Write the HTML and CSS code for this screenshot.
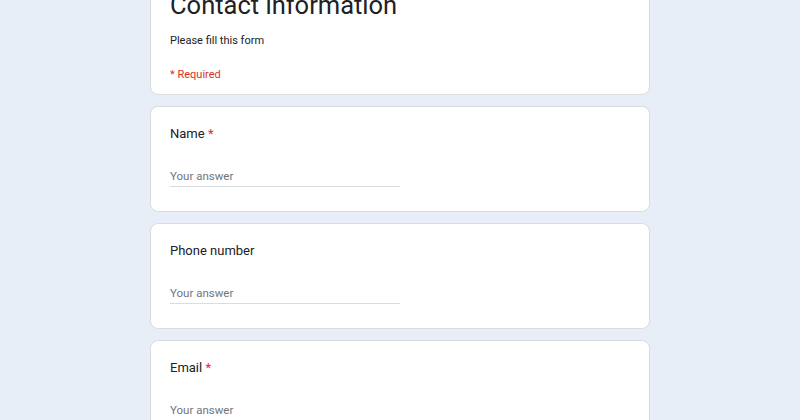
FILE: index.html
```html
<!DOCTYPE html>
<html lang="en">
<head>
    <meta charset="UTF-8">
    <meta name="viewport" content="width=device-width, initial-scale=1.0">
    <title>Contact information</title>
    <link rel="stylesheet" href="styles.css">
</head>
<body>
    <div class="container">
        <div class="card header-card">
            <h1>Contact information</h1>
            <p class="desc">Please fill this form</p>
            <p class="required-note">* Required</p>
        </div>

        <div class="card question">
            <div class="label">Name <span class="star">*</span></div>
            <input class="answer" type="text" placeholder="Your answer">
        </div>

        <div class="card question">
            <div class="label">Phone number</div>
            <input class="answer" type="text" placeholder="Your answer">
        </div>

        <div class="card question">
            <div class="label">Email <span class="star">*</span></div>
            <input class="answer" type="text" placeholder="Your answer">
        </div>
    </div>
</body>
</html>
```

FILE: styles.css
```css
body {
    font-family: Roboto, "Liberation Sans", sans-serif;
    background: #e8eef7;
    margin: 0;
    color: #202124;
}
.container {
    width: 500px;
    margin: -29px auto 0;
    display: flex;
    flex-direction: column;
    gap: 11px;
}
.card {
    background: white;
    border: 1px solid #dadce0;
    border-radius: 8px;
    padding: 19px 19px 24px;
}
.header-card {
    padding-top: 17px;
    padding-bottom: 11px;
}
h1 {
    font-size: 25.5px;
    font-weight: 400;
    margin: 0;
    line-height: 32px;
}
.desc {
    font-size: 11px;
    margin: 12px 0 0;
    line-height: 16px;
}
.required-note {
    font-size: 11px;
    color: #d93025;
    margin: 18px 0 0;
    line-height: 16px;
}
.label {
    font-size: 13px;
    line-height: 16px;
}
.star {
    color: #d93025;
}
.answer {
    display: block;
    width: 230px;
    height: 16px;
    margin: 26px 0 0;
    border: none;
    border-bottom: 1px solid #dadce0;
    padding: 0 0 2px;
    font-family: inherit;
    font-size: 11.5px;
    line-height: 16px;
    color: #202124;
    outline: none;
}
.answer::placeholder {
    color: #70757a;
}
```
